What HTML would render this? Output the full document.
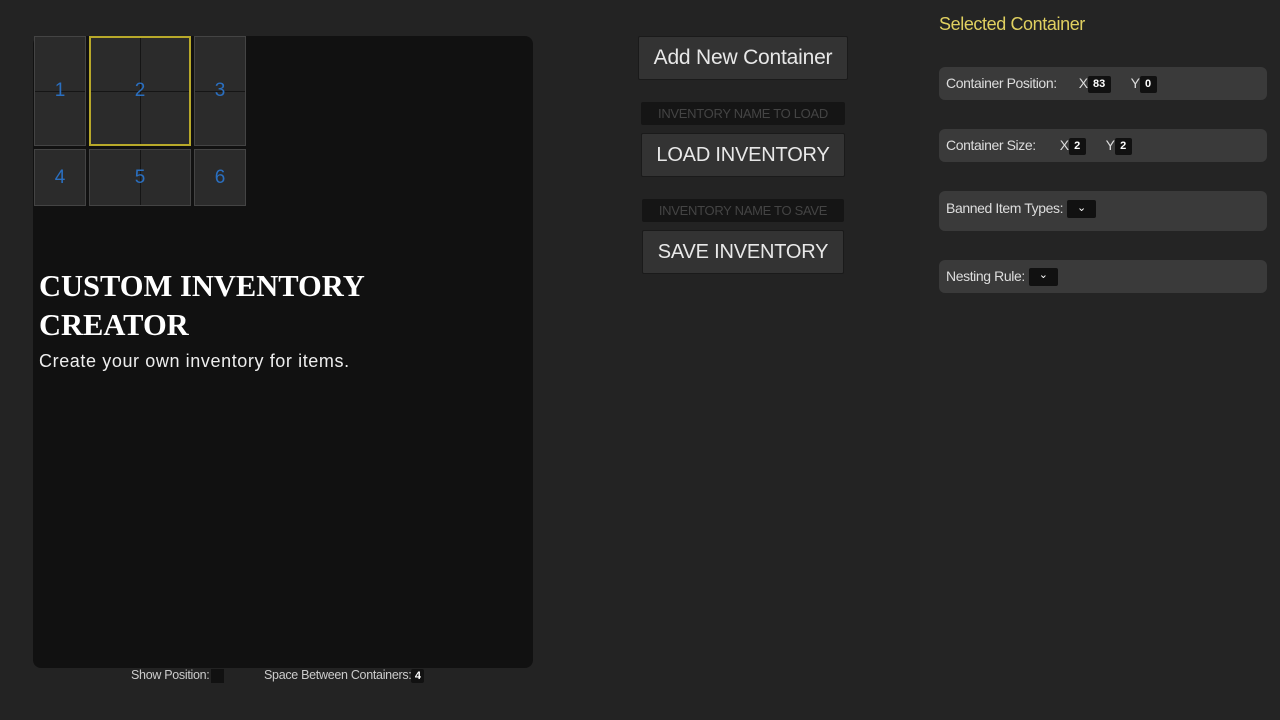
<!DOCTYPE html>
<html><head><style>
*{margin:0;padding:0;box-sizing:border-box}
body{width:1280px;height:720px;background:#232323;font-family:"Liberation Sans",sans-serif;position:relative;overflow:hidden;color:#ddd}
.abs{position:absolute}
.panel{left:33px;top:36px;width:500px;height:632px;background:#111;border-radius:8px}
.cell{position:absolute;background:#2b2b2b;border:1px solid #444;color:#2a6fc0;font-size:19px;display:flex;align-items:center;justify-content:center}
.h{position:absolute;left:0;right:0;top:50%;height:1px;background:#151515}
.v{position:absolute;top:0;bottom:0;left:50%;width:1px;background:#151515}
.num{position:relative;z-index:1}
.btn{position:absolute;background:#333;border:1px solid #1a1a1a;border-radius:2px;color:#e8e8e8;display:flex;align-items:center;justify-content:center;font-size:20px;letter-spacing:-0.2px}
.inp{position:absolute;background:#151515;border-radius:2px;color:#444;font-size:13px;display:flex;align-items:center;justify-content:center;letter-spacing:-0.3px}
.row{position:absolute;left:939px;width:328px;background:#3a3a3a;border-radius:6px;font-size:14px;color:#ddd;padding-left:7px;letter-spacing:-0.4px}
.box{display:inline-block;background:#111;color:#fff;font-weight:bold;font-size:11px;text-align:center;border-radius:2px;vertical-align:middle;letter-spacing:0}
</style></head><body>
<div class="abs panel"></div>
<div class="abs" style="left:920px;top:0;width:360px;height:720px;background:#242424"></div>
<div class="cell" style="left:34px;top:36px;width:52px;height:110px"><div class="h"></div><span class="num">1</span></div>
<div class="cell" style="left:89px;top:36px;width:102px;height:110px;border:2px solid #b8a92a"><div class="h"></div><div class="v"></div><span class="num">2</span></div>
<div class="cell" style="left:194px;top:36px;width:52px;height:110px"><div class="h"></div><span class="num">3</span></div>
<div class="cell" style="left:34px;top:149px;width:52px;height:57px"><span class="num">4</span></div>
<div class="cell" style="left:89px;top:149px;width:102px;height:57px"><div class="v"></div><span class="num">5</span></div>
<div class="cell" style="left:194px;top:149px;width:52px;height:57px"><span class="num">6</span></div>
<div class="abs" style="left:39px;top:267px;font-family:'Liberation Serif',serif;font-weight:bold;font-size:30.5px;line-height:39px;color:#fff">CUSTOM INVENTORY<br>CREATOR</div>
<div class="abs" style="left:39px;top:351px;font-size:18px;color:#eee;letter-spacing:0.6px">Create your own inventory for items.</div>
<div class="abs" style="left:131px;top:668px;font-size:12.5px;color:#ccc;letter-spacing:-0.3px">Show Position:<span style="display:inline-block;width:13px;height:14px;background:#111;vertical-align:middle;margin-left:1px"></span></div>
<div class="abs" style="left:264px;top:668px;font-size:12.5px;color:#ccc;letter-spacing:-0.3px">Space Between Containers:<span class="box" style="width:13px;height:14px;line-height:14px">4</span></div>
<div class="btn" style="left:638px;top:36px;width:210px;height:44px;font-size:21px">Add New Container</div>
<div class="inp" style="left:641px;top:102px;width:204px;height:23px">INVENTORY NAME TO LOAD</div>
<div class="btn" style="left:641px;top:133px;width:204px;height:44px">LOAD INVENTORY</div>
<div class="inp" style="left:642px;top:199px;width:202px;height:23px">INVENTORY NAME TO SAVE</div>
<div class="btn" style="left:642px;top:230px;width:202px;height:44px">SAVE INVENTORY</div>
<div class="abs" style="left:939px;top:14px;font-size:18px;color:#e0d060;letter-spacing:-0.4px">Selected Container</div>
<div class="row" style="top:67px;height:33px;line-height:33px">Container Position:<span style="margin-left:22px">X</span><span class="box" style="width:23px;height:17px;line-height:17px">83</span><span style="margin-left:20px">Y</span><span class="box" style="width:17px;height:17px;line-height:17px">0</span></div>
<div class="row" style="top:129px;height:33px;line-height:33px">Container Size:<span style="margin-left:24px">X</span><span class="box" style="width:17px;height:17px;line-height:17px">2</span><span style="margin-left:20px">Y</span><span class="box" style="width:17px;height:17px;line-height:17px">2</span></div>
<div class="row" style="top:191px;height:40px;padding-top:8px;line-height:18px">Banned Item Types:<span class="box" style="width:29px;height:18px;line-height:16px;font-weight:normal;margin-left:4px">⌄</span></div>
<div class="row" style="top:260px;height:33px;line-height:33px">Nesting Rule:<span class="box" style="width:29px;height:18px;line-height:14px;font-weight:normal;margin-left:4px">⌄</span></div>
</body></html>
